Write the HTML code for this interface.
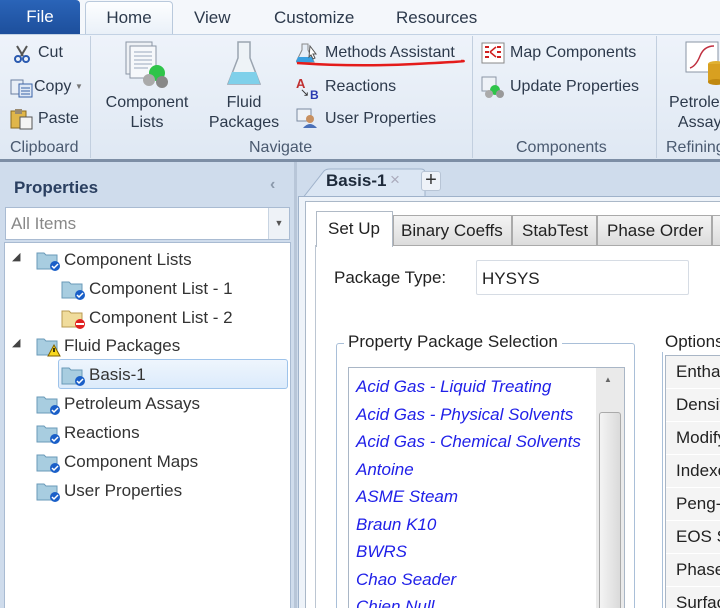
<!DOCTYPE html>
<html style="overflow:hidden;width:720px;height:608px"><head><meta charset="utf-8"><style>
*{margin:0;padding:0;box-sizing:border-box}
body{width:720px;height:608px;overflow:hidden;font-family:"Liberation Sans",sans-serif;font-size:16px;color:#333;background:#cfdcec;position:relative}
.a{position:absolute;white-space:nowrap}
.lbl{color:#4a5a70;font-size:16px}
.ico{position:absolute}
</style></head><body>
<div class="a" style="left:0;top:0;width:720px;height:34px;background:#f4f7fb"></div>
<div class="a" style="left:0;top:0;width:80px;height:34px;background:linear-gradient(#2a64b8,#1d4f9c);color:#fff;font-size:17px;text-align:center;line-height:34px;border-radius:0 4px 0 0">File</div>
<div class="a" style="left:85px;top:1px;width:88px;height:34px;background:linear-gradient(#fdfeff,#e9f0f8);border:1px solid #b9c9dc;border-bottom:none;border-radius:4px 4px 0 0;text-align:center;line-height:32px;font-size:17px;color:#2d3a4c">Home</div>
<div class="a" style="left:194px;top:8px;font-size:17px;color:#2d3a4c">View</div>
<div class="a" style="left:274px;top:8px;font-size:17px;color:#2d3a4c">Customize</div>
<div class="a" style="left:396px;top:8px;font-size:17px;color:#2d3a4c">Resources</div>
<div class="a" style="left:0;top:34px;width:720px;height:126px;background:linear-gradient(#eef3fa,#dfe8f3);border-top:1px solid #c3d2e4"></div>
<div class="a" style="left:90px;top:36px;width:1px;height:122px;background:#c2cfdf"></div>
<div class="a" style="left:472px;top:36px;width:1px;height:122px;background:#c2cfdf"></div>
<div class="a" style="left:656px;top:36px;width:1px;height:122px;background:#c2cfdf"></div>
<div class="a" style="left:0;top:159px;width:720px;height:3px;background:#7d8ea5"></div>
<svg class="ico" style="left:12px;top:44px" width="20" height="20"><path d="M5 2 L11 12 M15 2 L9 12" stroke="#555" stroke-width="2"/><circle cx="6" cy="15" r="3" fill="none" stroke="#2a5ab0" stroke-width="2"/><circle cx="14" cy="15" r="3" fill="none" stroke="#2a5ab0" stroke-width="2"/></svg>
<div class="a" style="left:38px;top:44px;color:#2d3a4c">Cut</div>
<svg class="ico" style="left:10px;top:78px" width="24" height="20"><rect x="1" y="2" width="12" height="14" fill="#e8eef6" stroke="#6a7fa0"/><rect x="9" y="6" width="13" height="13" fill="#dfe8f5" stroke="#3a63a8"/><path d="M11 10h9M11 13h9M11 16h9" stroke="#3a63a8"/></svg>
<div class="a" style="left:34px;top:78px;color:#2d3a4c">Copy</div>
<div class="a" style="left:75px;top:82px;font-size:8px;color:#777">▼</div>
<svg class="ico" style="left:10px;top:108px" width="24" height="22"><rect x="1" y="3" width="15" height="17" fill="#e0b64a" stroke="#8a6a20"/><rect x="5" y="1" width="7" height="5" fill="#9a8a70"/><rect x="10" y="9" width="12" height="12" fill="#f4f4f4" stroke="#555"/></svg>
<div class="a" style="left:38px;top:110px;color:#2d3a4c">Paste</div>
<div class="a lbl" style="left:10px;top:139px">Clipboard</div>
<svg class="ico" style="left:122px;top:40px" width="50" height="50"><rect x="4" y="2" width="26" height="32" fill="#eef1f5" stroke="#8a95a5"/><rect x="8" y="6" width="26" height="32" fill="#f6f8fb" stroke="#8a95a5"/><path d="M12 12h18M12 16h18M12 20h18M12 24h18M12 28h14" stroke="#9aa9bd"/><circle cx="35" cy="33" r="8" fill="#2fc44a"/><circle cx="27" cy="40" r="6" fill="#aaa"/><circle cx="40" cy="42" r="6" fill="#888"/></svg>
<div class="a" style="left:102px;top:93px;width:90px;text-align:center;color:#2d3a4c;line-height:20px">Component<br>Lists</div>
<svg class="ico" style="left:226px;top:40px" width="36" height="48"><path d="M12 2h12v16l10 26H2l10-26z" fill="#eef3f7" stroke="#9aa4b0" stroke-width="1.5"/><path d="M6 32h24l4 12H2z" fill="#7fd0ea"/></svg>
<div class="a" style="left:205px;top:93px;width:78px;text-align:center;color:#2d3a4c;line-height:20px">Fluid<br>Packages</div>
<svg class="ico" style="left:296px;top:42px" width="22" height="22"><path d="M6 2h6v6l6 12H0l6-12z" fill="#e6eef7" stroke="#888"/><path d="M2 15h14l2 5H0z" fill="#3aa0e0"/><path d="M14 4l6 8-3 0 2 4-2 1-2-4-2 2z" fill="#fff" stroke="#555"/></svg>
<div class="a" style="left:325px;top:44px;color:#2d3a4c">Methods Assistant</div>
<svg class="ico" style="left:295px;top:58px" width="170" height="10"><path d="M2 5 Q60 9 120 6 T166 3" stroke="#e41b1b" stroke-width="2.5" fill="none"/></svg>
<div class="a" style="left:296px;top:76px;font-size:13px;color:#c03030;font-weight:bold">A</div>
<div class="a" style="left:300px;top:86px;font-size:11px;color:#333">↘</div>
<div class="a" style="left:310px;top:88px;font-size:12px;color:#2a3ab0;font-weight:bold">B</div>
<div class="a" style="left:325px;top:78px;color:#2d3a4c">Reactions</div>
<svg class="ico" style="left:296px;top:107px" width="22" height="22"><rect x="1" y="2" width="14" height="12" fill="#eef2f7" stroke="#7a8aa0"/><circle cx="14" cy="12" r="4" fill="#c89060"/><path d="M7 21q7-8 14 0z" fill="#4a70b8"/></svg>
<div class="a" style="left:325px;top:110px;color:#2d3a4c">User Properties</div>
<div class="a lbl" style="left:249px;top:139px">Navigate</div>
<svg class="ico" style="left:481px;top:42px" width="24" height="22"><rect x="1" y="1" width="22" height="20" fill="#fff" stroke="#888"/><path d="M4 5h4M4 10h4M4 15h4M16 5h4M16 10h4M16 15h4" stroke="#d02020" stroke-width="2"/><path d="M9 10l6-5M9 10l6 5" stroke="#d02020" stroke-width="1.5"/></svg>
<div class="a" style="left:510px;top:44px;color:#2d3a4c">Map Components</div>
<svg class="ico" style="left:481px;top:76px" width="24" height="22"><rect x="1" y="1" width="14" height="14" fill="#eef2f7" stroke="#8a95a5"/><circle cx="14" cy="14" r="5" fill="#2fc44a"/><circle cx="8" cy="18" r="4" fill="#aaa"/><circle cx="19" cy="18" r="4" fill="#999"/></svg>
<div class="a" style="left:510px;top:78px;color:#2d3a4c">Update Properties</div>
<div class="a lbl" style="left:516px;top:139px">Components</div>
<svg class="ico" style="left:684px;top:40px" width="36" height="46"><rect x="2" y="2" width="32" height="30" fill="#fff" stroke="#8a95a5"/><path d="M6 28 Q12 26 16 16 T30 6" stroke="#c03040" fill="none" stroke-width="1.5"/><ellipse cx="32" cy="24" rx="8" ry="3" fill="#e0b030"/><rect x="24" y="24" width="16" height="18" fill="#d8a020"/><ellipse cx="32" cy="42" rx="8" ry="3" fill="#c08810"/></svg>
<div class="a" style="left:669px;top:93px;color:#2d3a4c;line-height:20px">Petroleum<br>&nbsp;&nbsp;Assays</div>
<div class="a lbl" style="left:666px;top:139px">Refining</div>
<div class="a" style="left:14px;top:178px;font-weight:bold;font-size:17px;color:#2a3f60">Properties</div>
<div class="a" style="left:270px;top:176px;color:#8a98aa;font-size:16px;font-weight:bold">‹</div>
<div class="a" style="left:5px;top:207px;width:285px;height:33px;background:#fff;border:1px solid #a9bbd2"></div>
<div class="a" style="left:11px;top:214px;color:#888;font-size:17px">All Items</div>
<div class="a" style="left:268px;top:208px;width:21px;height:31px;background:#eef2f7;border-left:1px solid #c8d4e2;text-align:center;font-size:9px;line-height:31px;color:#555">▼</div>
<div class="a" style="left:4px;top:242px;width:287px;height:370px;background:#fff;border:1px solid #a9bbd2"></div>
<div class="a" style="left:58px;top:359px;width:230px;height:30px;background:linear-gradient(#eef5fd,#dcebfb);border:1px solid #9ec3ea;border-radius:3px"></div>
<svg width="0" height="0" style="position:absolute"><defs><g id="fb"><path d="M1 4h7l2 2h11v14H1z" fill="#a8cde0" stroke="#6a9ab8"/><circle cx="19" cy="17" r="5" fill="#1a5fc8"/><path d="M16 17l2 2 4-4" stroke="#fff" stroke-width="1.5" fill="none"/></g><g id="fy"><path d="M1 4h7l2 2h11v14H1z" fill="#f0dc9c" stroke="#b89a50"/><circle cx="19" cy="17" r="5" fill="#e02020"/><path d="M15 17h8" stroke="#fff" stroke-width="2"/></g><g id="fw"><path d="M1 4h7l2 2h11v14H1z" fill="#a8cde0" stroke="#6a9ab8"/><path d="M18 10l6 11H12z" fill="#f8d820" stroke="#806000"/><path d="M18 13v4" stroke="#000" stroke-width="1.5"/></g></defs></svg>
<div class="a" style="left:12px;top:250px;font-size:11px;color:#444">◢</div>
<svg class="ico" style="left:36px;top:249px" width="26" height="24"><use href="#fb"/></svg>
<div class="a" style="left:64px;top:250px;font-size:17px">Component Lists</div>
<svg class="ico" style="left:61px;top:278px" width="26" height="24"><use href="#fb"/></svg>
<div class="a" style="left:89px;top:279px;font-size:17px">Component List - 1</div>
<svg class="ico" style="left:61px;top:307px" width="26" height="24"><use href="#fy"/></svg>
<div class="a" style="left:89px;top:308px;font-size:17px">Component List - 2</div>
<div class="a" style="left:12px;top:336px;font-size:11px;color:#444">◢</div>
<svg class="ico" style="left:36px;top:335px" width="26" height="24"><use href="#fw"/></svg>
<div class="a" style="left:64px;top:336px;font-size:17px">Fluid Packages</div>
<svg class="ico" style="left:61px;top:364px" width="26" height="24"><use href="#fb"/></svg>
<div class="a" style="left:89px;top:365px;font-size:17px">Basis-1</div>
<svg class="ico" style="left:36px;top:393px" width="26" height="24"><use href="#fb"/></svg>
<div class="a" style="left:64px;top:394px;font-size:17px">Petroleum Assays</div>
<svg class="ico" style="left:36px;top:422px" width="26" height="24"><use href="#fb"/></svg>
<div class="a" style="left:64px;top:423px;font-size:17px">Reactions</div>
<svg class="ico" style="left:36px;top:451px" width="26" height="24"><use href="#fb"/></svg>
<div class="a" style="left:64px;top:452px;font-size:17px">Component Maps</div>
<svg class="ico" style="left:36px;top:480px" width="26" height="24"><use href="#fb"/></svg>
<div class="a" style="left:64px;top:481px;font-size:17px">User Properties</div>
<div class="a" style="left:294px;top:162px;width:3px;height:446px;background:#b8c6d8"></div>
<svg class="ico" style="left:300px;top:165px" width="130" height="36"><path d="M2 34 L24 6 Q26 4 30 4 H121 Q125 4 125 8 V34" fill="#dbe6f3" stroke="#9fb2ca"/></svg>
<div class="a" style="left:326px;top:171px;font-weight:bold;font-size:17px;color:#1e2a3a">Basis-1</div>
<div class="a" style="left:390px;top:170px;font-size:17px;color:#aab">×</div>
<div class="a" style="left:421px;top:171px;width:20px;height:20px;background:#eef2f8;border:1px solid #b7c4d5;border-radius:3px;text-align:center;line-height:17px;font-size:20px;color:#333">+</div>
<div class="a" style="left:298px;top:196px;width:430px;height:420px;background:#eef3f9;border:1px solid #9fb2ca"></div>
<div class="a" style="left:305px;top:201px;width:420px;height:420px;background:#fff;border:1px solid #aab8c8"></div>
<div class="a" style="left:315px;top:245px;width:410px;height:370px;background:#fff;border:1px solid #bcc6d2"></div>
<div class="a" style="left:316px;top:211px;width:77px;height:36px;background:#fff;border:1px solid #b0bac6;border-bottom:none;padding:7px 0 0 11px;font-size:17px;color:#222">Set Up</div>
<div class="a" style="left:393px;top:215px;width:119px;height:31px;background:linear-gradient(#f4f4f4,#dcdcdc);border:1px solid #aaa;padding:5px 0 0 7px;font-size:17px;color:#222">Binary Coeffs</div>
<div class="a" style="left:512px;top:215px;width:85px;height:31px;background:linear-gradient(#f4f4f4,#dcdcdc);border:1px solid #aaa;padding:5px 0 0 9px;font-size:17px;color:#222">StabTest</div>
<div class="a" style="left:597px;top:215px;width:115px;height:31px;background:linear-gradient(#f4f4f4,#dcdcdc);border:1px solid #aaa;padding:5px 0 0 9px;font-size:17px;color:#222">Phase Order</div>
<div class="a" style="left:712px;top:215px;width:20px;height:31px;background:linear-gradient(#f4f4f4,#dcdcdc);border:1px solid #aaa"></div>
<div class="a" style="left:334px;top:268px;font-size:17px;color:#222">Package Type:</div>
<div class="a" style="left:476px;top:260px;width:213px;height:35px;border:1px solid #d6dce4;border-radius:2px;padding:8px 0 0 5px;font-size:17px;color:#222">HYSYS</div>
<div class="a" style="left:336px;top:343px;width:299px;height:280px;border:1px solid #a9bfd8;border-radius:3px"></div>
<div class="a" style="left:344px;top:332px;background:#fff;padding:0 4px;font-size:17px;color:#222">Property Package Selection</div>
<div class="a" style="left:348px;top:367px;width:277px;height:250px;border:1px solid #a9b6c6"></div>
<div class="a" style="left:596px;top:368px;width:28px;height:250px;background:#eaeaea"></div>
<div class="a" style="left:599px;top:412px;width:22px;height:200px;background:linear-gradient(90deg,#f4f4f4,#dadada);border:1px solid #aaa;border-radius:3px"></div>
<div class="a" style="left:604px;top:375px;font-size:8px;color:#666">▲</div>
<div class="a" style="left:356px;top:373px;font-style:italic;font-size:17px;color:#2020e8;line-height:27.5px">Acid Gas - Liquid Treating<br>Acid Gas - Physical Solvents<br>Acid Gas - Chemical Solvents<br>Antoine<br>ASME Steam<br>Braun K10<br>BWRS<br>Chao Seader<br>Chien Null</div>
<div class="a" style="left:662px;top:343px;width:80px;height:280px;border:1px solid #a9bfd8;border-radius:3px"></div>
<div class="a" style="left:662px;top:332px;background:#fff;padding:0 3px;font-size:17px;color:#222">Options</div>
<div class="a" style="left:665px;top:355px;width:60px;height:260px;border:1px solid #a9b6c6;background:#f4f4f4"></div>
<div class="a" style="left:666px;top:356px;width:60px;font-size:17px;color:#222;line-height:32px">
<div style="border-bottom:1px solid #fff;padding-left:10px">Enthalpy</div><div style="border-bottom:1px solid #fff;padding-left:10px">Density</div><div style="border-bottom:1px solid #fff;padding-left:10px">Modify</div><div style="border-bottom:1px solid #fff;padding-left:10px">Indexed</div><div style="border-bottom:1px solid #fff;padding-left:10px">Peng-</div><div style="border-bottom:1px solid #fff;padding-left:10px">EOS S</div><div style="border-bottom:1px solid #fff;padding-left:10px">Phase</div><div style="padding-left:10px">Surface</div></div>
</body></html>
